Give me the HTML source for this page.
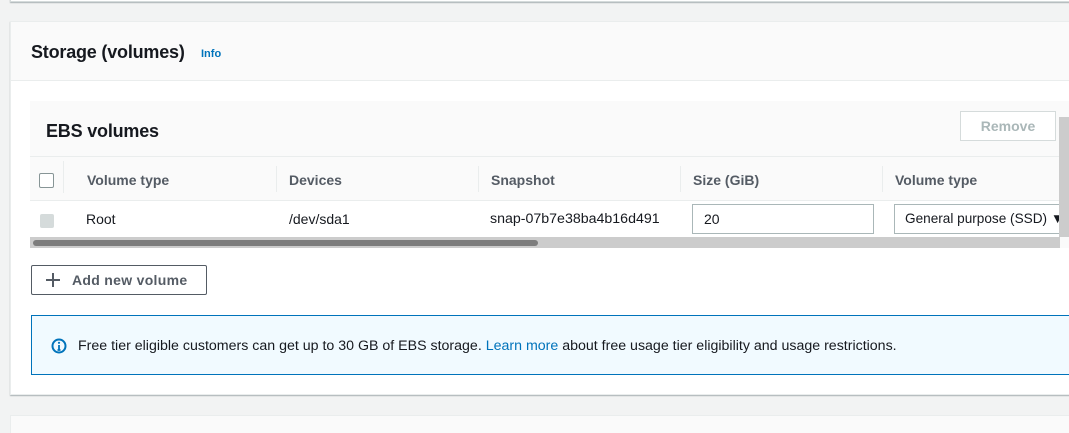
<!DOCTYPE html>
<html><head><style>
*{box-sizing:border-box;margin:0;padding:0}
html,body{width:1069px;height:433px;overflow:hidden}
body{background:#f2f3f3;font-family:"Liberation Sans",sans-serif;color:#16191f;position:relative;font-size:14px}
.abs{position:absolute}
</style></head><body>
<div class="abs" style="left:10px;top:-5px;width:1070px;height:7px;background:#fff;border:1px solid #d5dbdb;box-shadow:0 1px 1px rgba(0,28,36,.3)"></div>
<div class="abs" style="left:10px;top:21px;width:1070px;height:374px;background:#fff;border:1px solid #eaeded;box-shadow:0 1px 1px rgba(0,28,36,.3)">
  <div class="abs" style="left:0;top:0;width:100%;height:59px;background:#fafafa;border-bottom:1px solid #eaeded"></div>
  <div class="abs" style="left:20px;top:20px;font-size:18px;font-weight:bold;letter-spacing:-0.2px">Storage (volumes)</div>
  <div class="abs" style="left:190px;top:26px;font-size:11px;font-weight:bold;color:#0073bb">Info</div>
</div>
<div class="abs" style="left:30px;top:101px;width:1040px;height:147px;background:#fafafa"></div>
<div class="abs" style="left:46px;top:121px;font-size:18px;font-weight:bold;letter-spacing:-0.2px">EBS volumes</div>
<div class="abs" style="left:960px;top:111px;width:96px;height:30px;border:1px solid #d5dbdb;background:#fff;color:#aab7b8;font-weight:bold;text-align:center;line-height:28px;font-size:14px">Remove</div>
<div class="abs" style="left:30px;top:156px;width:1030px;height:1px;background:#eaeded"></div>
<div class="abs" style="left:39px;top:173px;width:15px;height:15px;border:1px solid #879596;border-radius:2px;background:#fff"></div>
<div class="abs" style="left:63px;top:161px;width:1px;height:32px;background:#eaeded"></div>
<div class="abs" style="left:276px;top:166px;width:1px;height:26px;background:#eaeded"></div>
<div class="abs" style="left:478px;top:166px;width:1px;height:26px;background:#eaeded"></div>
<div class="abs" style="left:680px;top:166px;width:1px;height:26px;background:#eaeded"></div>
<div class="abs" style="left:882px;top:166px;width:1px;height:26px;background:#eaeded"></div>
<div class="abs" style="left:87px;top:172px;font-weight:bold;color:#545b64">Volume type</div>
<div class="abs" style="left:289px;top:172px;font-weight:bold;color:#545b64">Devices</div>
<div class="abs" style="left:491px;top:172px;font-weight:bold;color:#545b64">Snapshot</div>
<div class="abs" style="left:693px;top:172px;font-weight:bold;color:#545b64">Size (GiB)</div>
<div class="abs" style="left:895px;top:172px;font-weight:bold;color:#545b64">Volume type</div>
<div class="abs" style="left:30px;top:200px;width:1030px;height:37px;background:#fff;border-top:1px solid #eaeded"></div>
<div class="abs" style="left:40px;top:214px;width:14px;height:14px;background:#d5dbdb;border-radius:2px"></div>
<div class="abs" style="left:86px;top:211px">Root</div>
<div class="abs" style="left:289px;top:211px">/dev/sda1</div>
<div class="abs" style="left:490px;top:211px;font-size:14.2px">snap-07b7e38ba4b16d491</div>
<div class="abs" style="left:692px;top:204px;width:182px;height:30px;border:1px solid #aab7b8;background:#fff;padding-left:11px;line-height:28px">20</div>
<div class="abs" style="left:894px;top:204px;width:165px;height:30px;border:1px solid #aab7b8;border-right:none;background:#fff;padding-left:10px;line-height:28px;white-space:nowrap;overflow:hidden;font-size:13.6px">General purpose (SSD) ▼</div>
<div class="abs" style="left:30px;top:237px;width:1030px;height:11px;background:#ccc"></div>
<div class="abs" style="left:33px;top:240px;width:505px;height:6px;background:#7d7d7d;border-radius:3px"></div>
<div class="abs" style="left:1059px;top:117px;width:10px;height:120px;background:#ccc"></div>
<div class="abs" style="left:31px;top:265px;width:176px;height:30px;border:1px solid #545b64;border-radius:2px;background:#fff"></div>
<svg class="abs" style="left:46px;top:273px" width="14" height="14"><path d="M7 0V14M0 7H14" stroke="#545b64" stroke-width="2"/></svg>
<div class="abs" style="left:72px;top:272px;font-weight:bold;color:#545b64;font-size:14px;letter-spacing:0.3px">Add new volume</div>
<div class="abs" style="left:31px;top:315px;width:1045px;height:60px;background:#f1faff;border:1px solid #0073bb"></div>
<svg class="abs" style="left:51px;top:338px" width="16" height="16"><circle cx="8" cy="8" r="6.5" fill="none" stroke="#0073bb" stroke-width="2"/><path d="M8 7V12M6.5 12H9.5" stroke="#0073bb" stroke-width="1.8"/><circle cx="8" cy="4.8" r="1.1" fill="#0073bb"/></svg>
<div class="abs" style="left:78px;top:338px;font-size:14.2px;white-space:nowrap">Free tier eligible customers can get up to 30 GB of EBS storage. <span style="color:#0073bb">Learn more</span> about free usage tier eligibility and usage restrictions.</div>
<div class="abs" style="left:10px;top:415px;width:1070px;height:30px;background:#fafafa;border:1px solid #eaeded"></div>
</body></html>
